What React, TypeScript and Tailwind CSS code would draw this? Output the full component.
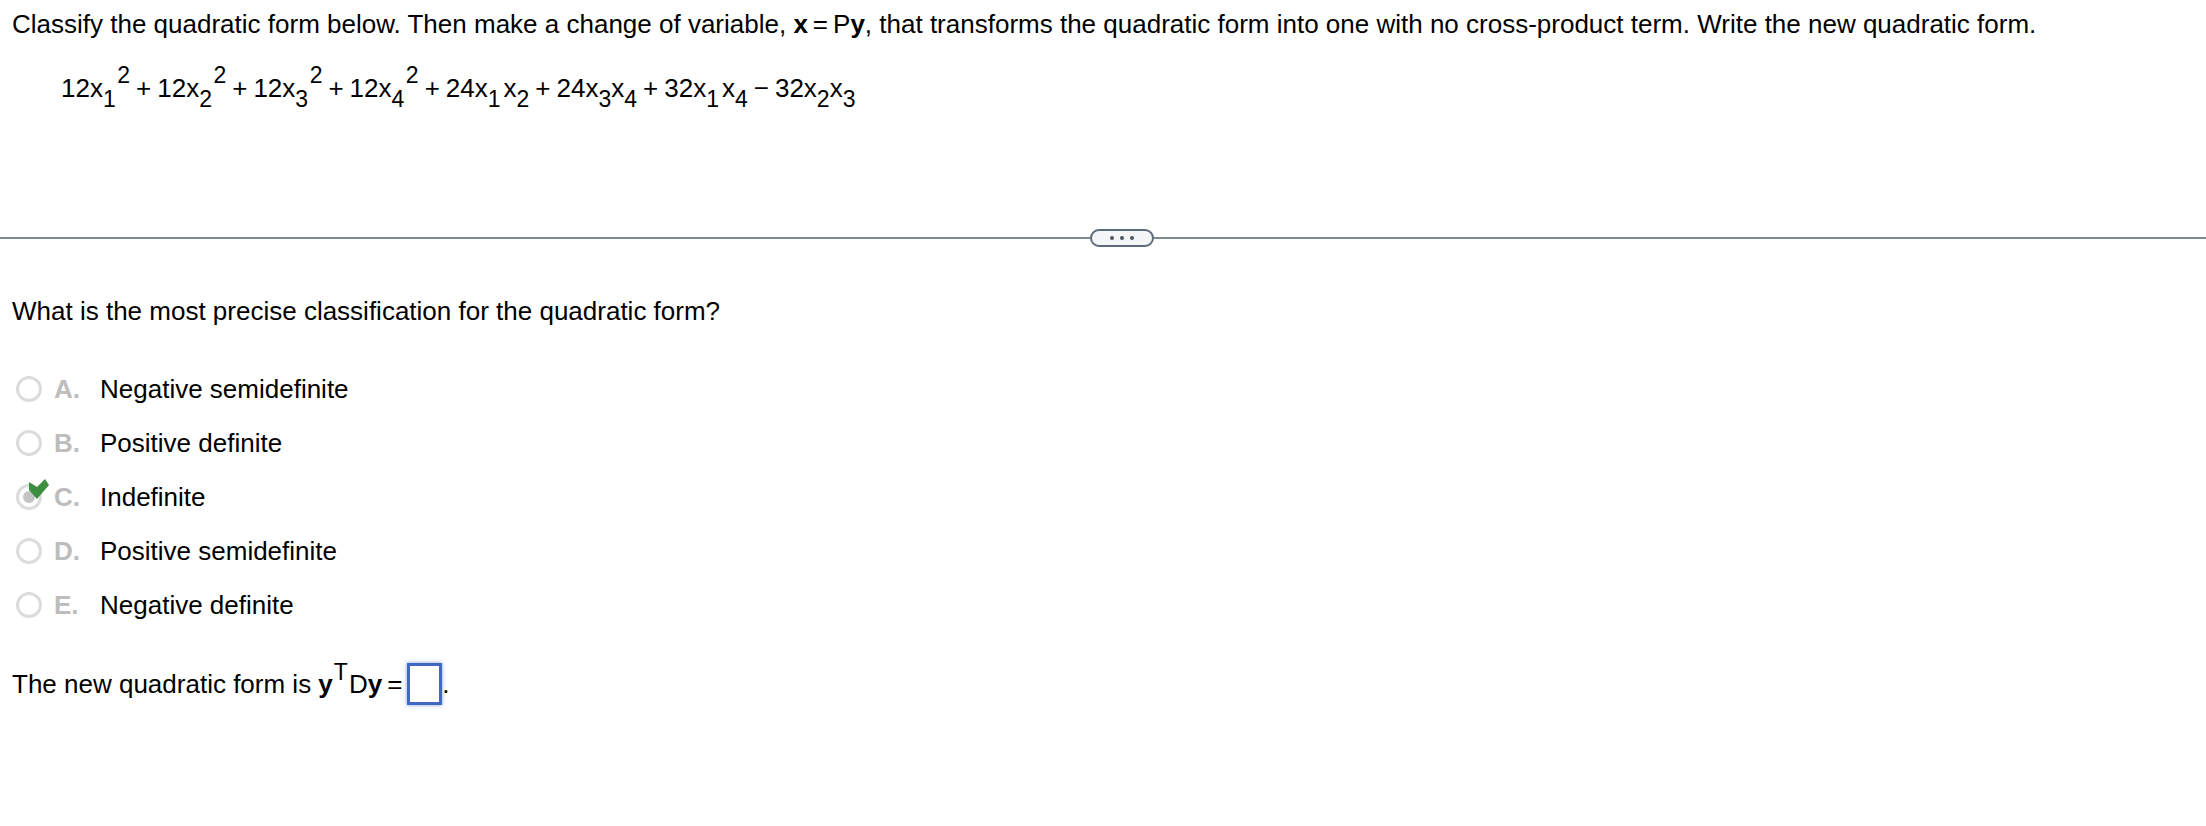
const font = { fontFamily: '"Liberation Sans", Arial, sans-serif' };

const options = [
  { letter: 'A.', text: 'Negative semidefinite' },
  { letter: 'B.', text: 'Positive definite' },
  { letter: 'C.', text: 'Indefinite', picked: true },
  { letter: 'D.', text: 'Positive semidefinite' },
  { letter: 'E.', text: 'Negative definite' },
];

function Term({ coef, sub, sup, wide }: { coef: string; sub: string; sup?: boolean; wide?: boolean }) {
  return (
    <span className={wide ? 'ml-[3px]' : ''}>
      {coef}x
      <span className="align-[-10px] text-[23px] leading-none">{sub}</span>
      {sup && <span className="ml-[1.5px] align-[14px] text-[23px] leading-none">2</span>}
    </span>
  );
}

function Plus({ minus }: { minus?: boolean }) {
  return <span className="mx-[6px]">{minus ? '−' : '+'}</span>;
}

function Radio({ picked }: { picked?: boolean }) {
  return (
    <span className="relative flex h-[26px] w-[26px] shrink-0 items-center justify-center rounded-full border-[3px] border-[#dcdcdc]">
      {picked && <span className="h-[12px] w-[12px] rounded-full bg-[#c4c4c4]" />}
      {picked && (
        <svg className="absolute left-[10px] top-[-8px] h-[20px] w-[20px] blur-[0.5px]" viewBox="0 0 20 20">
          <path d="M0 3 L8 8 L16 0 L20 6 L8 20 L0 11 Z" fill="#3c8f3f" />
        </svg>
      )}
    </span>
  );
}

export default function App() {
  return (
    <div className="h-[826px] w-[2206px] overflow-hidden bg-white text-[26px] leading-none text-black" style={font}>
      <p className="pl-3 pt-[11px]">
        Classify the quadratic form below. Then make a change of variable, <b>x</b>
        <span className="mx-[5px]">=</span>P<b>y</b>, that transforms the quadratic form into one with no cross-product
        term. Write the new quadratic form.
      </p>

      <div className="flex h-[70px] items-center pl-[61px] pt-[31px]">
        <p>
          <Term coef="12" sub="1" sup />
          <Plus />
          <Term coef="12" sub="2" sup />
          <Plus />
          <Term coef="12" sub="3" sup />
          <Plus />
          <Term coef="12" sub="4" sup />
          <Plus />
          <Term coef="24" sub="1" />
          <Term coef="" sub="2" wide />
          <Plus />
          <Term coef="24" sub="3" />
          <Term coef="" sub="4" />
          <Plus />
          <Term coef="32" sub="1" />
          <Term coef="" sub="4" wide />
          <Plus minus />
          <Term coef="32" sub="2" />
          <Term coef="" sub="3" />
        </p>
      </div>

      <div className="mt-[122px] flex items-center">
        <div className="h-[2px] w-[1090px] bg-[#7d8995]" />
        <div className="flex h-[18px] w-[64px] items-center justify-center gap-[6px] rounded-full border-2 border-[#5c6b7a] bg-[#f3f5f7]">
          <span className="h-[4px] w-[4px] rounded-full bg-[#4a5560]" />
          <span className="h-[4px] w-[4px] rounded-full bg-[#4a5560]" />
          <span className="h-[4px] w-[4px] rounded-full bg-[#4a5560]" />
        </div>
        <div className="h-[2px] flex-1 bg-[#7d8995]" />
      </div>

      <p className="mt-[51px] pl-3">What is the most precise classification for the quadratic form?</p>

      <ul className="mt-[52px] flex flex-col gap-[29px] pl-4">
        {options.map(o => (
          <li key={o.letter} className="flex h-[25px] items-center">
            <Radio picked={o.picked} />
            <span className="ml-3 w-[46px] font-bold text-[#bdbdbd]">{o.letter}</span>
            <span>{o.text}</span>
          </li>
        ))}
      </ul>

      <p className="mt-[44px] flex items-center pl-3">
        The new quadratic form is&nbsp;
        <b>y</b>
        <span className="mb-[22px] ml-[1px] text-[23px]">T</span>
        <span className="ml-[1px]">D</span>
        <b>y</b>
        <span className="ml-[5px] mr-[5px]">=</span>
        <span className="h-[42px] w-[35px] border-[3px] border-[#4267c4] shadow-[0_0_4px_#7f9ae0]" />
        <span>.</span>
      </p>
    </div>
  );
}
